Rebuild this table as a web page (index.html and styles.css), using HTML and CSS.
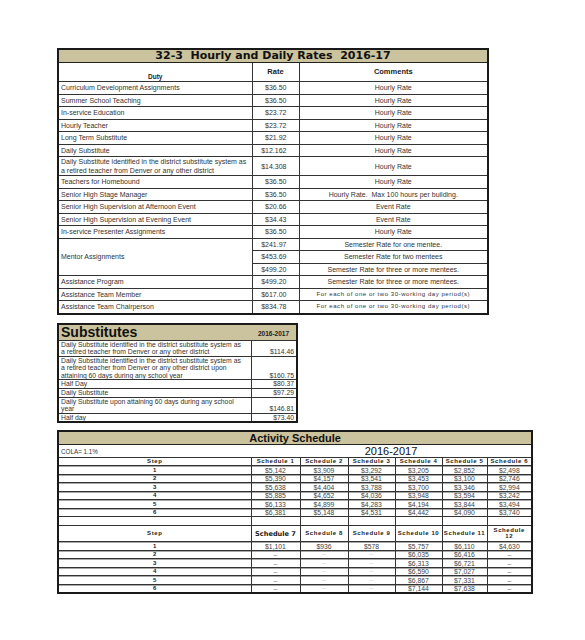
FILE: index.html
```html
<!DOCTYPE html>
<html>
<head>
<meta charset="utf-8">
<link rel="stylesheet" href="styles.css">
</head>
<body>
<div class="page">
  <table class="rates">
    <colgroup><col class="c-duty"><col class="c-rate"><col class="c-com"></colgroup>
    <tr class="title-row"><td colspan="3" class="title">32-3  Hourly and Daily Rates  2016-17</td></tr>
    <tr class="head-row">
      <td class="h-duty">Duty</td>
      <td class="h-rate">Rate</td>
      <td class="h-com">Comments</td>
    </tr>
    <tr class="r"><td class="duty">Curriculum Development Assignments</td><td class="rate">$36.50</td><td class="com">Hourly Rate</td></tr>
    <tr class="r"><td class="duty">Summer School Teaching</td><td class="rate">$36.50</td><td class="com">Hourly Rate</td></tr>
    <tr class="r"><td class="duty">In-service Education</td><td class="rate">$23.72</td><td class="com">Hourly Rate</td></tr>
    <tr class="r"><td class="duty">Hourly Teacher</td><td class="rate">$23.72</td><td class="com">Hourly Rate</td></tr>
    <tr class="r"><td class="duty">Long Term Substitute</td><td class="rate">$21.92</td><td class="com">Hourly Rate</td></tr>
    <tr class="r"><td class="duty">Daily Substitute</td><td class="rate">$12.162</td><td class="com">Hourly Rate</td></tr>
    <tr class="r2"><td class="duty">Daily Substitute identified in the district substitute system as a retired teacher from Denver or any other district</td><td class="rate">$14.308</td><td class="com">Hourly Rate</td></tr>
    <tr class="r"><td class="duty">Teachers for Homebound</td><td class="rate">$36.50</td><td class="com">Hourly Rate</td></tr>
    <tr class="r"><td class="duty">Senior High Stage Manager</td><td class="rate">$36.50</td><td class="com">Hourly Rate.  Max 100 hours per building.</td></tr>
    <tr class="r"><td class="duty">Senior High Supervision at Afternoon Event</td><td class="rate">$20.66</td><td class="com">Event Rate</td></tr>
    <tr class="r"><td class="duty">Senior High Supervision at Evening Event</td><td class="rate">$34.43</td><td class="com">Event Rate</td></tr>
    <tr class="r"><td class="duty">In-service Presenter Assignments</td><td class="rate">$36.50</td><td class="com">Hourly Rate</td></tr>
    <tr class="r"><td class="duty" rowspan="3">Mentor Assignments</td><td class="rate">$241.97</td><td class="com">Semester Rate for one mentee.</td></tr>
    <tr class="r"><td class="rate">$453.69</td><td class="com">Semester Rate for two mentees</td></tr>
    <tr class="r"><td class="rate">$499.20</td><td class="com">Semester Rate for three or more mentees.</td></tr>
    <tr class="r"><td class="duty">Assistance Program</td><td class="rate">$499.20</td><td class="com">Semester Rate for three or more mentees.</td></tr>
    <tr class="r"><td class="duty">Assistance Team Member</td><td class="rate">$617.00</td><td class="com small">For each of one or two 30-working day period(s)</td></tr>
    <tr class="r"><td class="duty">Assistance Team Chairperson</td><td class="rate">$834.78</td><td class="com small">For each of one or two 30-working day period(s)</td></tr>
  </table>

  <table class="subs">
    <colgroup><col class="s-desc"><col class="s-val"></colgroup>
    <tr class="s-title"><td class="s-name">Substitutes</td><td class="s-year">2016-2017</td></tr>
    <tr class="s-l2"><td class="s-txt">Daily Substitute identified in the district substitute system as<br>a retired teacher from Denver or any other district</td><td class="s-num">$114.46</td></tr>
    <tr class="s-l3"><td class="s-txt">Daily Substitute identified in the district substitute system as<br>a retired teacher from Denver or any other district upon<br>attaining 60 days during any school year</td><td class="s-num">$160.75</td></tr>
    <tr class="s-l1"><td class="s-txt">Half Day</td><td class="s-num">$80.37</td></tr>
    <tr class="s-l1"><td class="s-txt">Daily Substitute</td><td class="s-num">$97.29</td></tr>
    <tr class="s-l2"><td class="s-txt">Daily Substitute upon attaining 60 days during any school<br>year</td><td class="s-num">$146.81</td></tr>
    <tr class="s-l1"><td class="s-txt">Half day</td><td class="s-num">$73.40</td></tr>
  </table>

  <table class="act">
    <colgroup><col class="a-step"><col class="a1"><col class="a2"><col class="a3"><col class="a4"><col class="a5"><col class="a6"></colgroup>
    <tr class="a-title"><td colspan="7">Activity Schedule</td></tr>
    <tr class="a-cola"><td class="cola">COLA= 1.1%</td><td colspan="6" class="year">2016-2017</td></tr>
    <tr class="a-head">
      <td class="step-h">Step</td>
      <td class="sch-h">Schedule 1</td><td class="sch-h">Schedule 2</td><td class="sch-h">Schedule 3</td><td class="sch-h">Schedule 4</td><td class="sch-h">Schedule 5</td><td class="sch-h">Schedule 6</td>
    </tr>
    <tr class="a-row"><td class="step">1</td><td>$5,142</td><td>$3,909</td><td>$3,292</td><td>$3,205</td><td>$2,852</td><td>$2,498</td></tr>
    <tr class="a-row"><td class="step">2</td><td>$5,390</td><td>$4,157</td><td>$3,541</td><td>$3,453</td><td>$3,100</td><td>$2,746</td></tr>
    <tr class="a-row"><td class="step">3</td><td>$5,638</td><td>$4,404</td><td>$3,788</td><td>$3,700</td><td>$3,346</td><td>$2,994</td></tr>
    <tr class="a-row"><td class="step">4</td><td>$5,885</td><td>$4,652</td><td>$4,036</td><td>$3,948</td><td>$3,594</td><td>$3,242</td></tr>
    <tr class="a-row"><td class="step">5</td><td>$6,133</td><td>$4,899</td><td>$4,283</td><td>$4,194</td><td>$3,844</td><td>$3,494</td></tr>
    <tr class="a-row"><td class="step">6</td><td>$6,381</td><td>$5,148</td><td>$4,531</td><td>$4,442</td><td>$4,090</td><td>$3,740</td></tr>
    <tr class="a-gap"><td></td><td></td><td></td><td></td><td></td><td></td><td></td></tr>
    <tr class="a-head2">
      <td class="step-h">Step</td>
      <td class="sch-big">Schedule 7</td><td class="sch-h">Schedule 8</td><td class="sch-h">Schedule 9</td><td class="sch-h">Schedule 10</td><td class="sch-h">Schedule 11</td><td class="sch-h two">Schedule<br>12</td>
    </tr>
    <tr class="a-row"><td class="step">1</td><td>$1,101</td><td>$936</td><td>$578</td><td>$5,757</td><td>$6,110</td><td>$4,630</td></tr>
    <tr class="a-row"><td class="step">2</td><td class="dash">–</td><td class="dd">--</td><td class="dd">--</td><td>$6,035</td><td>$6,416</td><td class="dash">–</td></tr>
    <tr class="a-row"><td class="step">3</td><td class="dash">–</td><td class="dd">--</td><td class="dd">--</td><td>$6,313</td><td>$6,721</td><td class="dash">–</td></tr>
    <tr class="a-row"><td class="step">4</td><td class="dash">–</td><td class="dd">--</td><td class="dd">--</td><td>$6,590</td><td>$7,027</td><td class="dash">–</td></tr>
    <tr class="a-row"><td class="step">5</td><td class="dash">–</td><td class="dd">--</td><td class="dd">--</td><td>$6,867</td><td>$7,331</td><td class="dash">–</td></tr>
    <tr class="a-row"><td class="step">6</td><td class="dash">–</td><td class="dd">--</td><td class="dd">--</td><td>$7,144</td><td>$7,638</td><td class="dash">–</td></tr>
  </table>
</div>
</body>
</html>
```
FILE: styles.css
```css
html, body {
  margin: 0;
  padding: 0;
  background: #ffffff;
}

.page {
  padding: 48px 0 0 57px;
  font-family: "Liberation Sans", Arial, sans-serif;
  color: #222;
}

table {
  border-collapse: collapse;
  table-layout: fixed;
  border: 2px solid #1a1a1a;
}

td {
  padding: 0;
  border: 1px solid #333;
  overflow: hidden;
}

/* ---------- Hourly and daily rates ---------- */
.rates { width: 430px; }
.c-duty { width: 194px; }
.c-rate { width: 47px; }
.c-com { width: 189px; }

.title {
  background: #cbc39d;
  height: 12px;
  font-family: "DejaVu Sans", Verdana, sans-serif;
  font-weight: bold;
  font-size: 11px;
  line-height: 12px;
  text-align: center;
  white-space: pre;
  color: #111;
  border-bottom: 1px solid #222;
}

.head-row td { height: 18px; font-weight: bold; text-align: center; line-height: 8px; }
.h-duty { vertical-align: bottom; font-size: 6.5px; }
.h-rate { vertical-align: middle; font-size: 7.5px; }
.head-row td.h-com { vertical-align: middle; font-size: 7.5px; line-height: 6px; }

.rates .r td { height: 11.5px; }
.rates .r2 td { height: 18px; }
.rates td.duty,
.rates td.rate,
.rates td.com {
  font-size: 7px;
  line-height: 9px;
  vertical-align: middle;
  color: #333;
}
.rates td.duty { padding-left: 2px; text-align: left; }
.rates td.rate { text-align: right; padding-right: 12px; }
.rates td.com { text-align: center; white-space: pre; }
.rates td.com.small { font-size: 6px; letter-spacing: 0.55px; }

/* ---------- Substitutes ---------- */
.subs { width: 239px; margin-top: 8px; }
.s-desc { width: 193px; }
.s-val { width: 46px; }

.s-title td {
  background: #cbc39d;
  height: 13px;
  vertical-align: middle;
}
.s-name {
  font-weight: bold;
  font-size: 14px;
  line-height: 13px;
  padding-left: 2px;
  color: #111;
  border-right: none !important;
}
.s-year {
  font-weight: bold;
  font-size: 6.5px;
  text-align: center;
  padding-top: 2px;
  border-left: none !important;
}
.s-txt, .s-num {
  font-size: 6.8px;
  line-height: 7.6px;
  vertical-align: bottom;
  color: #333;
}
.s-txt { padding-left: 2px; white-space: nowrap; }
.s-num { text-align: right; padding-right: 2px; }
.s-l1 td { height: 7.6px; }
.s-l2 td { height: 15.2px; }
.s-l3 td { height: 22.8px; }

/* ---------- Activity schedule ---------- */
.act { width: 474px; margin-top: 7px; }
.a-step { width: 193px; }
.a1 { width: 49px; }
.a2 { width: 48px; }
.a3 { width: 47px; }
.a4 { width: 47px; }
.a5 { width: 45px; }
.a6 { width: 45px; }

.a-title td {
  background: #cbc39d;
  height: 12px;
  text-align: center;
  font-weight: bold;
  font-size: 11px;
  line-height: 12px;
  color: #111;
  border-bottom: 1px solid #222;
}
.act td { text-align: center; }
.a-cola td { height: 12px; vertical-align: middle; }
.act td.cola {
  font-size: 6.3px;
  padding-left: 2px;
  text-align: left;
  border-right: none;
  color: #333;
}
.act td.year {
  font-size: 11px;
  text-align: center;
  border-left: none;
  color: #111;
}

.a-head td { height: 7px; }
.step-h, .sch-h {
  font-weight: bold;
  font-size: 6px;
  letter-spacing: 0.6px;
  line-height: 7px;
  color: #222;
}
.a-head2 td { height: 14px; vertical-align: middle; }
.a-head2 td.two { line-height: 6px; vertical-align: top; padding-top: 1px; }
.sch-big {
  font-family: "DejaVu Sans", Verdana, sans-serif;
  font-weight: bold;
  font-size: 6.6px;
  color: #222;
}

.a-row td {
  height: 7.5px;
  font-size: 6.8px;
  line-height: 7px;
  color: #444;
  box-shadow: inset 0 1px 0 #a8a8a8;
}
.a-row td.step {
  font-weight: bold;
  font-size: 6px;
  color: #222;
}
.a-row td.dash { color: #777; }
.a-row td.dd { color: #aaa; font-size: 5.5px; letter-spacing: 0.5px; }
.a-gap td { height: 8px; }
```
